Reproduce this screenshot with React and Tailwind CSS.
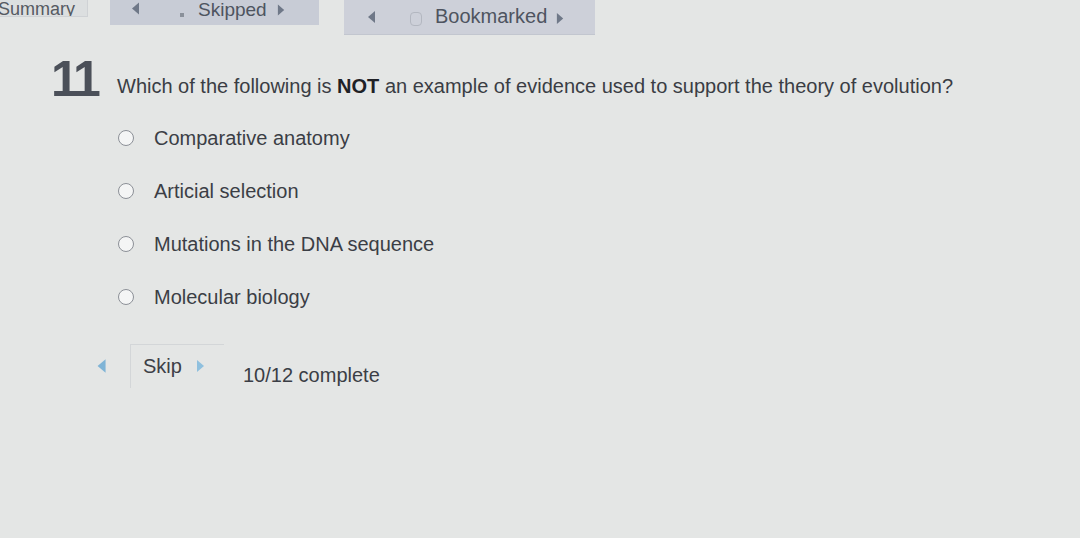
const options = [
  'Comparative anatomy',
  'Articial selection',
  'Mutations in the DNA sequence',
  'Molecular biology',
];

function ArrowLeft({ className }) {
  return (
    <svg viewBox="0 0 10 14" className={className}>
      <path d="M9 1 L2 7 L9 13 Z" fill="currentColor" />
    </svg>
  );
}

function ArrowRight({ className }) {
  return (
    <svg viewBox="0 0 10 14" className={className}>
      <path d="M1 1 L8 7 L1 13 Z" fill="currentColor" />
    </svg>
  );
}

export default function App() {
  return (
    <div
      className="w-[1080px] h-[538px] overflow-hidden bg-[#e4e6e5] text-[#3d4047]"
      style={{ fontFamily: '"Liberation Sans", Arial, sans-serif' }}
    >
      {/* Top filter bar */}
      <div className="flex items-start h-[35px]">
        <div className="w-[88px] h-[17px] bg-[#dcdfe0] border-r border-b border-[#cfd2d5] flex items-end justify-end pr-3 text-[18px] leading-[18px] text-[#555a62] overflow-hidden">
          <span className="-mb-[2px]">Summary</span>
        </div>
        <div className="ml-[22px] w-[209px] h-[25px] bg-[#c8ccd6] flex items-end pb-[6px] pl-[20px] text-[19px] leading-[19px] text-[#4e5460] overflow-hidden">
          <ArrowLeft className="w-[10px] h-[15px] text-[#6f7888] mb-[3px]" />
          <span className="ml-[40px] w-[4px] h-[4px] mb-[2px] bg-[#8a909a]" />
          <span className="ml-[14px]">Skipped</span>
          <ArrowRight className="ml-[10px] w-[9px] h-[14px] text-[#6f7888] mb-[2px]" />
        </div>
        <div className="ml-[25px] w-[251px] h-[35px] bg-[#cdd0d9] border-b border-[#c2c6cf] flex items-end pb-[8px] pl-[22px] text-[20px] leading-none text-[#4e5460]">
          <ArrowLeft className="w-[10px] h-[16px] text-[#6f7888] mb-[1px]" />
          <span className="ml-[34px] w-[12px] h-[14px] border border-[#b3b7c0] rounded-sm" />
          <span className="ml-[13px]">Bookmarked</span>
          <ArrowRight className="ml-[9px] w-[9px] h-[15px] text-[#6f7888]" />
        </div>
      </div>

      {/* Question */}
      <div className="flex items-start mt-[25px] pl-[51px]">
        <div className="text-[50px] font-bold leading-[38px] text-[#4b5059] tracking-[-3px] w-[66px]">11</div>
        <div className="mt-[16px] text-[20px] leading-none text-[#3a3d44]">
          Which of the following is <span className="font-bold text-[#1f2126]">NOT</span> an example of evidence used to support the theory of evolution?
        </div>
      </div>

      {/* Options */}
      <div className="mt-[30px] pl-[118px] flex flex-col gap-[33px]">
        {options.map((o) => (
          <label key={o} className="flex items-center gap-[20px] text-[20px] leading-[20px] text-[#3b3e45]">
            <span className="w-[16px] h-[16px] rounded-full border-[1.5px] border-[#8c9097] bg-[#f4f5f5]" />
            {o}
          </label>
        ))}
      </div>

      {/* Footer nav */}
      <div className="mt-[37px] pl-[95px] flex items-start">
        <ArrowLeft className="mt-[14px] w-[12px] h-[16px] text-[#7fb4d6]" />
        <div className="ml-[23px] w-[94px] h-[44px] border-l border-t border-[#d3d6d8] flex items-center pl-[12px] pb-[2px] gap-[14px] text-[20px] text-[#3d4047]">
          Skip
          <ArrowRight className="w-[10px] h-[16px] text-[#8fc0de]" />
        </div>
        <div className="ml-[19px] mt-[21px] text-[20px] leading-none text-[#3b3e45]">10/12 complete</div>
      </div>
    </div>
  );
}
